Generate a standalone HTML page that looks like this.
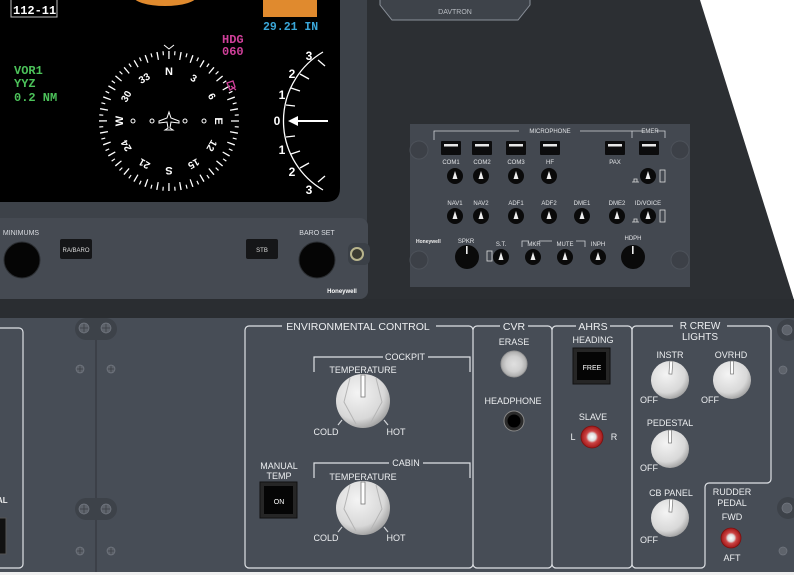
<!DOCTYPE html>
<html><head><meta charset="utf-8"><style>
html,body{margin:0;padding:0;width:794px;height:575px;overflow:hidden;background:#2c2f33}
svg{display:block}
text{font-family:"Liberation Sans",sans-serif;}
text.m, .m text{font-family:"Liberation Mono",monospace;font-weight:bold}
</style></head><body>
<svg width="794" height="575" viewBox="0 0 794 575" xmlns="http://www.w3.org/2000/svg">
<defs>
<radialGradient id="kw" cx="40%" cy="35%" r="70%"><stop offset="0" stop-color="#f4f4f4"/><stop offset="0.7" stop-color="#d8d8d8"/><stop offset="1" stop-color="#9a9a9a"/></radialGradient>
<radialGradient id="red" cx="50%" cy="50%" r="50%"><stop offset="0" stop-color="#fff"/><stop offset="0.35" stop-color="#ddd"/><stop offset="0.55" stop-color="#c44"/><stop offset="1" stop-color="#a01818"/></radialGradient>
<radialGradient id="er" cx="50%" cy="50%" r="50%"><stop offset="0" stop-color="#e0e0e0"/><stop offset="0.6" stop-color="#cfcfcf"/><stop offset="1" stop-color="#aaa"/></radialGradient>
</defs>
<rect width="794" height="575" fill="#2c2f33"/>
<polygon points="700,0 794,0 794,300" fill="#ffffff"/>
<rect x="-10" y="-10" width="377" height="240" rx="10" fill="#3d4249"/>
<rect x="-10" y="218" width="378" height="81" rx="8" fill="#454a52"/>
<path d="M-5,-5 H340 V188 Q340,202 326,202 H-5 Z" fill="#000"/>
<path d="M380,-5 H530 V5 L518,20 H392 L380,5 Z" fill="#3e434a" stroke="#8a9099" stroke-width="1"/>
<text x="455" y="14" font-size="7" fill="#b8bcc2" text-anchor="middle">DAVTRON</text>
<ellipse cx="165" cy="-4" rx="32" ry="10" fill="#e08a2e"/>
<rect x="263" y="-2" width="54" height="19" fill="#e08a2e"/>
<text class="m" x="263" y="30" font-size="11.5" fill="#3aa6d8">29.21 IN</text>
<rect x="11" y="-2" width="46" height="19" fill="none" stroke="#bbb" stroke-width="1"/>
<text class="m" x="13" y="14" font-size="12" fill="#fff">112-11</text>
<text class="m" x="222" y="43" font-size="12" fill="#d0409a">HDG</text>
<text class="m" x="222" y="55" font-size="12" fill="#d0409a">060</text>
<g class="m" font-size="12" fill="#4cc25a">
<text x="14" y="74">VOR1</text><text x="14" y="87">YYZ</text><text x="14" y="101">0.2 NM</text></g>
<g transform="translate(169,121)">
<circle r="66" fill="none" stroke="#fff" stroke-width="8" stroke-dasharray="1.3 10.22" transform="rotate(-90.6)"/>
<circle r="68" fill="none" stroke="#fff" stroke-width="4" stroke-dasharray="1.2 10.67" transform="rotate(-85.6)"/>
<path d="M-5,-76 L0,-72 L5,-76" fill="none" stroke="#fff" stroke-width="1"/>
<g fill="#fff" font-weight="bold" font-size="11" text-anchor="middle">
<text y="-46">N</text>
<text y="-46" transform="rotate(30)" font-size="10">3</text>
<text y="-46" transform="rotate(60)" font-size="10">6</text>
<text y="-46" transform="rotate(90)">E</text>
<text y="-46" transform="rotate(120)" font-size="10">12</text>
<text y="-46" transform="rotate(150)" font-size="10">15</text>
<text y="-46" transform="rotate(180)">S</text>
<text y="-46" transform="rotate(210)" font-size="10">21</text>
<text y="-46" transform="rotate(240)" font-size="10">24</text>
<text y="-46" transform="rotate(270)">W</text>
<text y="-46" transform="rotate(300)" font-size="10">30</text>
<text y="-46" transform="rotate(330)" font-size="10">33</text>
</g>
<g fill="none" stroke="#fff" stroke-width="1"><circle cx="-36" r="2"/><circle cx="-17" r="2"/><circle cx="16" r="2"/><circle cx="35" r="2"/></g>
<path d="M0,-9 L2,-3 L10,0 L10,2 L2,1 L1,7 L4,9 L-4,9 L-1,7 L-2,1 L-10,2 L-10,0 L-2,-3 Z" fill="none" stroke="#fff" stroke-width="1"/>
<path d="M58,-38 l6,-2 l2,6 l-5,3 Z M62,-35 l5,4" fill="none" stroke="#d0409a" stroke-width="1.3"/>
</g>
<path d="M323,52 A80,80 0 0 0 323,190" fill="none" stroke="#fff" stroke-width="1.3"/>
<g stroke="#fff" stroke-width="1.3">
<line x1="318" y1="60" x2="325" y2="66"/><line x1="300" y1="74" x2="309" y2="79"/><line x1="291" y1="88" x2="300" y2="91"/><line x1="286" y1="105" x2="295" y2="106"/><line x1="286" y1="137" x2="295" y2="136"/><line x1="291" y1="154" x2="300" y2="151"/><line x1="300" y1="168" x2="309" y2="163"/><line x1="318" y1="182" x2="325" y2="176"/>
<line x1="298" y1="121" x2="328" y2="121" stroke-width="2"/></g>
<path d="M288,121 L298,116 L298,126 Z" fill="#fff"/>
<g fill="#fff" font-weight="bold" font-size="12" text-anchor="middle">
<text x="309" y="60">3</text><text x="292" y="78">2</text><text x="282" y="99">1</text><text x="277" y="125">0</text><text x="282" y="154">1</text><text x="292" y="176">2</text><text x="309" y="194">3</text></g>
<g fill="#d8dbe0" font-size="7" text-anchor="middle">
<text x="21" y="235">MINIMUMS</text><text x="317" y="235">BARO SET</text></g>
<circle cx="22" cy="260" r="18" fill="#050505" stroke="#2a2d31"/>
<circle cx="317" cy="260" r="18" fill="#050505" stroke="#2a2d31"/>
<rect x="60" y="239" width="32" height="20" rx="2" fill="#151618"/>
<text x="76" y="252" font-size="6" fill="#ddd" text-anchor="middle">RA/BARO</text>
<rect x="246" y="239" width="32" height="20" rx="2" fill="#151618"/>
<text x="262" y="252" font-size="6" fill="#ddd" text-anchor="middle">STB</text>
<rect x="348" y="243" width="22" height="22" rx="6" fill="#3b4047"/>
<circle cx="357" cy="254" r="6" fill="#3a3a30" stroke="#b8b48c" stroke-width="2"/>
<text x="342" y="293" font-size="6" font-weight="bold" fill="#fff" text-anchor="middle">Honeywell</text>
<rect x="410" y="124" width="280" height="163" fill="#434850"/>
<g fill="#3c4047" stroke="#4d525a"><circle cx="419" cy="150" r="9"/><circle cx="680" cy="150" r="9"/><circle cx="419" cy="260" r="9"/><circle cx="680" cy="260" r="9"/></g>
<g fill="none" stroke="#cfd2d6" stroke-width="0.8">
<path d="M434,140 V131 H519 M580,131 H633 M632,138 V131 H645 M656,131 H665 V138"/>
<path d="M522,247 V241 H529 M539,241 H552 M576,241 H585 V247"/>
</g>
<g fill="#e0e2e5" font-size="6" text-anchor="middle">
<text x="550" y="133">MICROPHONE</text><text x="650" y="133">EMER</text>
<text x="451" y="164">COM1</text><text x="482" y="164">COM2</text><text x="516" y="164">COM3</text><text x="550" y="164">HF</text><text x="615" y="164">PAX</text>
<text x="455" y="205">NAV1</text><text x="481" y="205">NAV2</text><text x="516" y="205">ADF1</text><text x="549" y="205">ADF2</text><text x="582" y="205">DME1</text><text x="617" y="205">DME2</text><text x="648" y="205">ID/VOICE</text>
<text x="466" y="243">SPKR</text><text x="501" y="246">S.T.</text><text x="534" y="246">MKR</text><text x="565" y="246">MUTE</text><text x="598" y="246">INPH</text><text x="633" y="240">HDPH</text>
</g>
<text x="416" y="243" font-size="5" font-weight="bold" fill="#eee">Honeywell</text>
<g fill="#0c0c0d">
<rect x="441" y="141" width="20" height="14" rx="1"/><rect x="472" y="141" width="20" height="14" rx="1"/><rect x="506" y="141" width="20" height="14" rx="1"/><rect x="540" y="141" width="20" height="14" rx="1"/><rect x="605" y="141" width="20" height="14" rx="1"/><rect x="639" y="141" width="20" height="14" rx="1"/></g>
<g fill="#e8e8e8">
<rect x="444" y="144" width="14" height="2.5"/><rect x="475" y="144" width="14" height="2.5"/><rect x="509" y="144" width="14" height="2.5"/><rect x="543" y="144" width="14" height="2.5"/><rect x="608" y="144" width="14" height="2.5"/><rect x="642" y="144" width="14" height="2.5"/></g>
<g fill="#0a0a0a">
<circle cx="455" cy="176" r="8"/><circle cx="481" cy="176" r="8"/><circle cx="516" cy="176" r="8"/><circle cx="549" cy="176" r="8"/><circle cx="648" cy="176" r="8"/>
<circle cx="455" cy="216" r="8"/><circle cx="481" cy="216" r="8"/><circle cx="516" cy="216" r="8"/><circle cx="549" cy="216" r="8"/><circle cx="582" cy="216" r="8"/><circle cx="617" cy="216" r="8"/><circle cx="648" cy="216" r="8"/>
<circle cx="467" cy="257" r="12"/><circle cx="501" cy="257" r="8"/><circle cx="533" cy="257" r="8"/><circle cx="565" cy="257" r="8"/><circle cx="598" cy="257" r="8"/><circle cx="633" cy="257" r="12"/></g>
<g fill="#eee">
<path d="M455,171 l2.5,8 h-5z M481,171 l2.5,8 h-5z M516,171 l2.5,8 h-5z M549,171 l2.5,8 h-5z M648,171 l2.5,8 h-5z"/>
<path d="M455,211 l2.5,8 h-5z M481,211 l2.5,8 h-5z M516,211 l2.5,8 h-5z M549,211 l2.5,8 h-5z M582,211 l2.5,8 h-5z M617,211 l2.5,8 h-5z M648,211 l2.5,8 h-5z"/>
<path d="M501,252 l2.5,8 h-5z M533,252 l2.5,8 h-5z M565,252 l2.5,8 h-5z M598,252 l2.5,8 h-5z"/>
<rect x="466" y="246" width="1.6" height="8"/><rect x="632" y="246" width="1.6" height="8"/></g>
<g fill="none" stroke="#ddd" stroke-width="0.8"><rect x="660" y="170" width="5" height="12"/><rect x="660" y="210" width="5" height="12"/><rect x="487" y="251" width="5" height="10"/><path d="M632,182 h7 M634,182 v-3 h3 v3 M632,222 h7 M634,222 v-3 h3 v3"/></g>
<rect x="0" y="299" width="794" height="20" fill="#2a2d31"/>
<rect x="0" y="318" width="794" height="254" fill="#474d56"/>
<rect x="0" y="572" width="794" height="3" fill="#f0f0f0"/>
<line x1="96" y1="318" x2="96" y2="572" stroke="#383c43" stroke-width="1.5"/>
<g fill="#3d4249"><rect x="75" y="318" width="42" height="22" rx="11"/><rect x="75" y="498" width="42" height="22" rx="11"/><circle cx="788" cy="330" r="11"/><circle cx="788" cy="508" r="11"/></g>
<g fill="#5e636b" stroke="#727780" stroke-width="0.7">
<circle cx="84" cy="328" r="5"/><circle cx="106" cy="328" r="5"/><circle cx="80" cy="369" r="4"/><circle cx="111" cy="369" r="4"/>
<circle cx="84" cy="509" r="5"/><circle cx="106" cy="509" r="5"/><circle cx="80" cy="551" r="4"/><circle cx="111" cy="551" r="4"/>
<circle cx="787" cy="330" r="5"/><circle cx="783" cy="370" r="4"/><circle cx="787" cy="508" r="5"/><circle cx="783" cy="551" r="4"/></g>
<g stroke="#3a3e44" stroke-width="0.8"><path d="M80,328h8M84,324v8M102,328h8M106,324v8M77,369h6M80,366v6M108,369h6M111,366v6M80,509h8M84,505v8M102,509h8M106,505v8M77,551h6M80,548v6M108,551h6M111,548v6"/></g>
<path d="M-5,328 H19 a4,4 0 0 1 4,4 V564 a4,4 0 0 1 -4,4 H-5" fill="none" stroke="#dfe2e6" stroke-width="1.2"/>
<text x="-3" y="503" font-size="8" font-weight="bold" fill="#eee">AL</text>
<rect x="-4" y="518" width="10" height="36" fill="#111" stroke="#555"/>
<g fill="none" stroke="#dfe2e6" stroke-width="1.2">
<path d="M282,326 H249 a4,4 0 0 0 -4,4 V564 a4,4 0 0 0 4,4 H469 a4,4 0 0 0 4,-4 V330 a4,4 0 0 0 -4,-4 H436"/>
<path d="M473,330 a4,4 0 0 1 4,-4 H500 M528,326 H548 a4,4 0 0 1 4,4 V564 a4,4 0 0 1 -4,4 H477 a4,4 0 0 1 -4,-4"/>
<path d="M552,330 a4,4 0 0 1 4,-4 H576 M610,326 H628 a4,4 0 0 1 4,4 V564 a4,4 0 0 1 -4,4 H556 a4,4 0 0 1 -4,-4"/>
<path d="M632,330 a4,4 0 0 1 4,-4 H673 M727,326 H767 a4,4 0 0 1 4,4 V479 a4,4 0 0 1 -4,4 H709 a4,4 0 0 0 -4,4 V564 a4,4 0 0 1 -4,4 H636 a4,4 0 0 1 -4,-4 V330"/>
<path d="M314,372 V357 H383 M428,357 H470 V372"/>
<path d="M314,478 V463 H389 M423,463 H470 V478"/>
</g>
<g fill="#eceef0" text-anchor="middle" font-size="9">
<text x="358" y="330" font-size="10.5">ENVIRONMENTAL CONTROL</text>
<text x="514" y="330" font-size="10.5">CVR</text>
<text x="593" y="330" font-size="10.5">AHRS</text>
<text x="700" y="329" font-size="10">R CREW</text><text x="700" y="340" font-size="10">LIGHTS</text>
<text x="405" y="360">COCKPIT</text><text x="406" y="466">CABIN</text>
<text x="363" y="373">TEMPERATURE</text><text x="363" y="480">TEMPERATURE</text>
<text x="326" y="435">COLD</text><text x="396" y="435">HOT</text>
<text x="326" y="541">COLD</text><text x="396" y="541">HOT</text>
<text x="279" y="469">MANUAL</text><text x="279" y="479">TEMP</text>
<text x="514" y="345">ERASE</text><text x="513" y="404">HEADPHONE</text>
<text x="593" y="343">HEADING</text><text x="593" y="420">SLAVE</text>
<text x="573" y="440">L</text><text x="614" y="440">R</text>
<text x="670" y="358">INSTR</text><text x="731" y="358">OVRHD</text>
<text x="649" y="403">OFF</text><text x="710" y="403">OFF</text>
<text x="670" y="426">PEDESTAL</text><text x="649" y="471">OFF</text>
<text x="671" y="496">CB PANEL</text><text x="649" y="543">OFF</text>
<text x="732" y="495">RUDDER</text><text x="732" y="506">PEDAL</text>
<text x="732" y="520">FWD</text><text x="732" y="561">AFT</text>
</g>
<g stroke="#d0d3d6" stroke-width="1.2"><line x1="342" y1="420" x2="338" y2="425"/><line x1="384" y1="420" x2="388" y2="425"/><line x1="342" y1="527" x2="338" y2="532"/><line x1="384" y1="527" x2="388" y2="532"/></g>
<circle cx="363" cy="401" r="27" fill="url(#kw)"/>
<circle cx="363" cy="508" r="27" fill="url(#kw)"/>
<g fill="none" stroke="#b5b5b5" stroke-width="1"><path d="M350,378 L344,402 L356,424 M376,378 L382,402 L370,424"/><path d="M350,485 L344,509 L356,531 M376,485 L382,509 L370,531"/></g>
<rect x="361" y="375" width="4" height="22" fill="#fff" stroke="#777" stroke-width="0.8"/>
<rect x="361" y="482" width="4" height="22" fill="#fff" stroke="#777" stroke-width="0.8"/>
<rect x="260" y="482" width="37" height="36" fill="#262626" stroke="#111"/><rect x="264" y="486" width="29" height="28" fill="#050505"/>
<text x="279" y="504" font-size="7" fill="#fff" text-anchor="middle">ON</text>
<rect x="573" y="348" width="37" height="36" fill="#262626" stroke="#111"/><rect x="577" y="352" width="29" height="28" fill="#050505"/>
<text x="592" y="370" font-size="7" fill="#fff" text-anchor="middle">FREE</text>
<circle cx="514" cy="364" r="13" fill="url(#er)" stroke="#999"/>
<circle cx="514" cy="421" r="10" fill="#2b2b2b" stroke="#888" stroke-width="1"/><circle cx="514" cy="421" r="6.5" fill="#000"/>
<circle cx="592" cy="437" r="11" fill="url(#red)" stroke="#7a1010" stroke-width="0.8"/>
<circle cx="731" cy="538" r="10" fill="url(#red)" stroke="#7a1010" stroke-width="0.8"/>
<g fill="url(#kw)"><circle cx="670" cy="380" r="19"/><circle cx="732" cy="380" r="19"/><circle cx="670" cy="449" r="19"/><circle cx="670" cy="518" r="19"/></g>
<g fill="#fff" stroke="#777" stroke-width="0.7"><rect x="668.5" y="361" width="3" height="13" transform="rotate(4 670 380)"/><rect x="730.5" y="361" width="3" height="13"/><rect x="668.5" y="430" width="3" height="13"/><rect x="668.5" y="499" width="3" height="13" transform="rotate(4 670 518)"/></g>
</svg>
</body></html>
